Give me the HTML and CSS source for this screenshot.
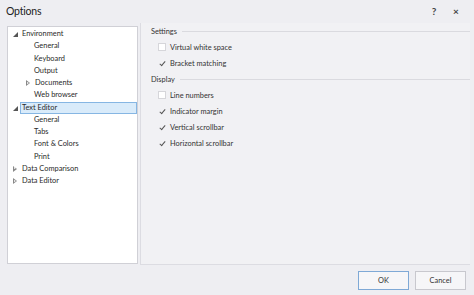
FILE: index.html
```html
<!DOCTYPE html>
<html>
<head>
<meta charset="utf-8">
<link rel="stylesheet" href="styles.css">
</head>
<body>
<div class="window">
  <div class="titlebar">
    <span class="title">Options</span>
    <span class="tb-btn help">?</span>
    <span class="tb-btn close">×</span>
  </div>
  <div class="main">
    <div class="tree">
      <div class="node lvl0"><span class="arrow open"></span>Environment</div>
      <div class="node lvl1">General</div>
      <div class="node lvl1">Keyboard</div>
      <div class="node lvl1">Output</div>
      <div class="node lvl1"><span class="arrow closed sub"></span>Documents</div>
      <div class="node lvl1">Web browser</div>
      <div class="node lvl0 selected"><span class="arrow open"></span><span class="sel">Text Editor</span></div>
      <div class="node lvl1">General</div>
      <div class="node lvl1">Tabs</div>
      <div class="node lvl1">Font &amp; Colors</div>
      <div class="node lvl1">Print</div>
      <div class="node lvl0"><span class="arrow closed"></span>Data Comparison</div>
      <div class="node lvl0"><span class="arrow closed"></span>Data Editor</div>
    </div>
    <div class="panel">
      <div class="group-title"><span>Settings</span><i></i></div>
      <label class="check"><span class="box"></span>Virtual white space</label>
      <label class="check"><span class="box on"></span>Bracket matching</label>
      <div class="group-title"><span>Display</span><i></i></div>
      <label class="check"><span class="box"></span>Line numbers</label>
      <label class="check"><span class="box on"></span>Indicator margin</label>
      <label class="check"><span class="box on"></span>Vertical scrollbar</label>
      <label class="check"><span class="box on"></span>Horizontal scrollbar</label>
    </div>
  </div>
  <div class="footer">
    <button class="btn default">OK</button>
    <button class="btn">Cancel</button>
  </div>
</div>
</body>
</html>
```
FILE: styles.css
```css
html, body {
  margin: 0;
  padding: 0;
}
body {
  width: 474px;
  height: 295px;
  background: #eeeef2;
  font-family: Lato, "Open Sans", sans-serif;
  color: #333;
  overflow: hidden;
}
.window {
  height: 295px;
  display: flex;
  flex-direction: column;
}
.titlebar {
  height: 22px;
  display: flex;
  align-items: center;
  padding: 0 7px 0 6px;
}
.title {
  font-size: 10.5px;
  letter-spacing: -0.2px;
  color: #222;
  flex: 1;
}
.tb-btn {
  font-size: 10px;
  font-weight: bold;
  color: #444;
  width: 22px;
  text-align: center;
}
.main {
  display: flex;
  padding: 1px 4px 0 7px;
  height: 243px;
  box-sizing: border-box;
  gap: 2px;
}
.tree {
  width: 131px;
  height: 238px;
  margin-top: 3px;
  padding-top: 1px;
  background: #fff;
  border: 1px solid #d0d0d6;
  box-sizing: border-box;
}
.node {
  height: 12.25px;
  line-height: 12px;
  font-size: 7.4px;
  color: #2a2a2a;
  display: flex;
  align-items: center;
  white-space: nowrap;
}
.lvl0 { padding-left: 4px; }
.lvl1 { padding-left: 26px; }
.lvl1 .sub { margin-left: -9px; }
.arrow {
  width: 6px;
  height: 6px;
  margin-right: 4px;
  display: inline-block;
  position: relative;
}
.arrow.open::before {
  content: "";
  position: absolute;
  left: 1px;
  top: 1px;
  border-style: solid;
  border-width: 0 0 5px 5px;
  border-color: transparent transparent #555 transparent;
}
.arrow.closed::before {
  content: "";
  position: absolute;
  left: 1px;
  top: 0;
  border-style: solid;
  border-width: 3px 0 3px 4px;
  border-color: transparent transparent transparent #888;
}
.arrow.closed::after {
  content: "";
  position: absolute;
  left: 2px;
  top: 1.5px;
  border-style: solid;
  border-width: 1.5px 0 1.5px 2px;
  border-color: transparent transparent transparent #fff;
}
.selected .sel {
  flex: 1;
  background: #d9ebfa;
  border: 1px solid #86b6e3;
  margin-left: -2px;
  padding-left: 1px;
  height: 12px;
  line-height: 10px;
  box-sizing: border-box;
}
.panel {
  flex: 1;
  background: #f1f1f4;
  border-left: 1px solid #dcdce2;
  border-bottom: 1px solid #dcdce2;
  padding: 0 0 0 10px;
  font-size: 7.4px;
  color: #333;
}
.group-title {
  display: flex;
  align-items: center;
  height: 16px;
}
.group-title i {
  flex: 1;
  height: 1px;
  background: #dadadf;
  margin-left: 5px;
  margin-top: 1px;
}
.check {
  display: flex;
  align-items: center;
  height: 16px;
  padding-left: 7px;
}
.box {
  width: 8px;
  height: 8px;
  border: 1px solid #d6d6da;
  background: #fff;
  margin-right: 4px;
  box-sizing: border-box;
  position: relative;
}
.box.on {
  border-color: transparent;
  background: transparent;
}
.box.on::after {
  content: "";
  position: absolute;
  left: 2px;
  top: 0;
  width: 2px;
  height: 5px;
  border: solid #555;
  border-width: 0 1px 1px 0;
  transform: rotate(40deg);
}
.footer {
  flex: 1;
  display: flex;
  justify-content: flex-end;
  align-items: center;
  gap: 6px;
  padding-right: 8px;
}
.btn {
  width: 51px;
  height: 19px;
  font-family: Lato, "Open Sans", sans-serif;
  font-size: 7.4px;
  color: #333;
  background: #f6f6f8;
  border: 1px solid #c8c8ce;
  padding: 0;
}
.btn.default {
  border-color: #7fa9d6;
}
```
